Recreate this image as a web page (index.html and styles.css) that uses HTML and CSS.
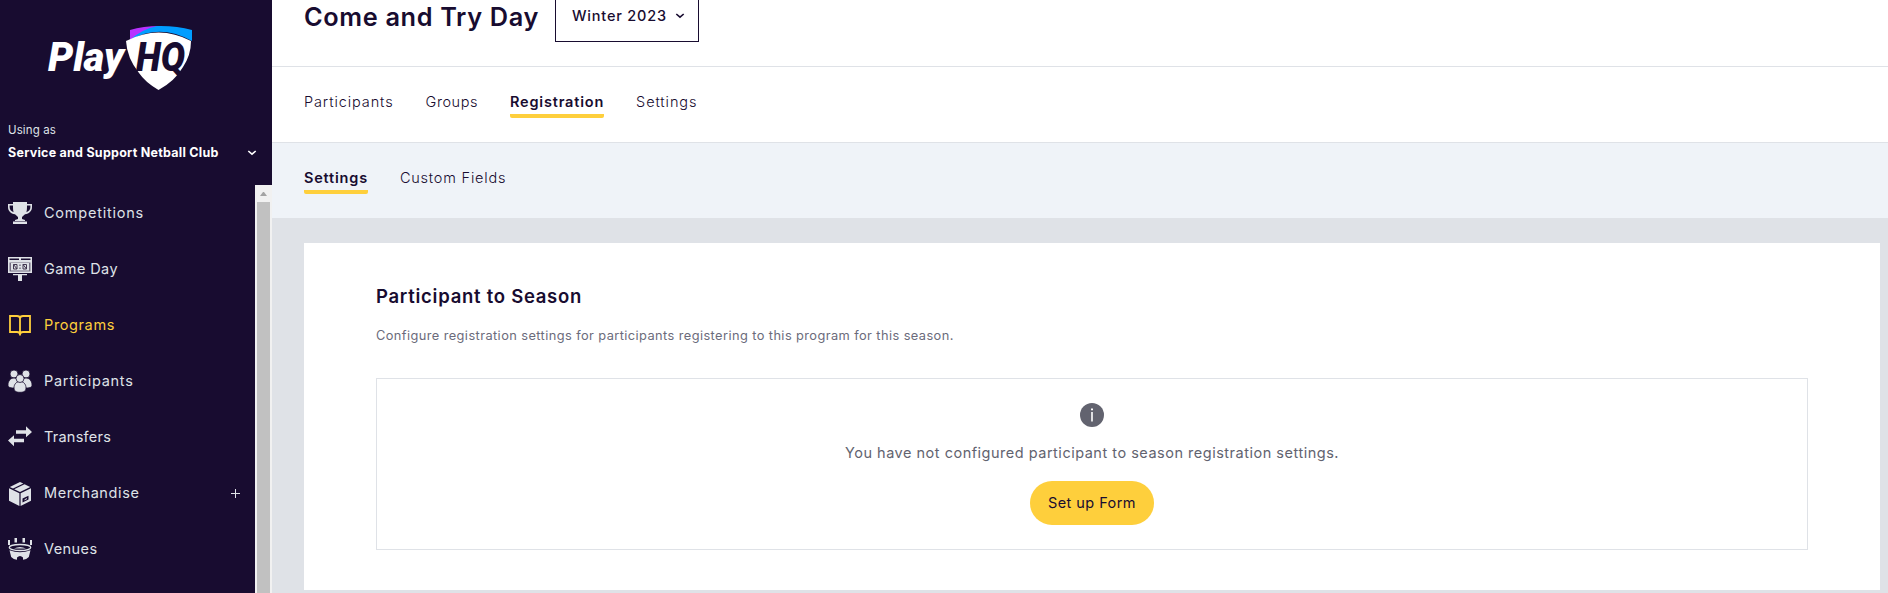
FILE: index.html
```html
<!DOCTYPE html>
<html lang="en">
<head>
    <meta charset="UTF-8">
    <meta name="viewport" content="width=device-width, initial-scale=1.0">
    <title>PlayHQ - Come and Try Day</title>
    <link rel="stylesheet" href="styles.css">
</head>
<body>
    <div class="app">
        <!-- Sidebar -->
        <aside class="sidebar">
            <svg class="logo" width="160" height="80" viewBox="40 15 160 80">
                <path d="M130 30Q143 26 160 26L153 30Q140 34 130 40Z" fill="#b832ff"/>
                <path d="M130 40Q142 29 157 26Q176 25.500 192 30V41Q160 23 130 40Z" fill="#009dff"/>
                <path d="M126 41Q159 24 191 41Q191 55 183 67Q175 81 158.500 90Q145 82 139 73Q127 58 126 41Z" fill="#fff"/>
                <text class="logo-text" x="48" y="71" fill="#fff" textLength="76" lengthAdjust="spacingAndGlyphs">Play</text>
                <text class="logo-text logo-hq" x="136" y="71" textLength="49" lengthAdjust="spacingAndGlyphs">HQ</text>
            </svg>
            <div class="account">
                <div class="account-label">Using as</div>
                <div class="account-name">
                    <span>Service and Support Netball Club</span>
                    <svg width="10" height="6" viewBox="0 0 10 6"><path d="M1.300 1L5 4.200L8.700 1"/></svg>
                </div>
            </div>
            <div class="menu-wrap">
                <nav class="menu">
                    <a class="menu-item competitions">
                        <svg width="24" height="24" viewBox="0 0 24 24"><path d="M5 1h14v2h5v3c0 4-2.500 6.500-7 7.300-1 1.300-2.400 2-3 2.700v2l3 1v1H7v-1l3-1v-2c-.600-.700-2-1.400-3-2.700C2.500 12.500 0 10 0 6V3h5zM1.600 4.500V6c0 2.500 1.400 4.300 4 5.200C5 9.500 5 7 5 4.500zM22.400 4.500H19c0 2.500 0 5-.600 6.700 2.600-.900 4-2.700 4-5.200zM5 20.500h14V23H5z" fill-rule="evenodd"/></svg>
                        <span>Competitions</span>
                    </a>
                    <a class="menu-item game-day">
                        <svg width="24" height="24" viewBox="0 0 24 24"><path d="M0 0h24v16H0zM1.500 1.500v1.500h9.500V1.500zM13 1.500v1.500h9.500V1.500z" fill-rule="evenodd"/><path d="M1.500 5.500h21v9h-21z" fill="#756e83"/><path d="M3 6h18v7.500H3z"/><path d="M5.500 7.500h3.500v4.500H5.500zL9 12M15 7.500h3.500v4.500H15zl3.500 4.500M12 7.500v1.500M12 10.500v1.500" fill="none" stroke="#40364f"/><path d="M5 17h14v1.200h-5V24h-4v-5.800H5z"/></svg>
                        <span>Game Day</span>
                    </a>
                    <a class="menu-item programs active">
                        <svg width="24" height="24" viewBox="0 0 24 24"><path d="M2 3h7c1.700 0 3 1 3 2.500C12 4 13.300 3 15 3h7v16h-7c-1.700 0-3 .500-3 2.500 0-2-1.300-2.500-3-2.500H2zM12 5.500v17" fill="none" stroke="#fecf3c" stroke-width="1.800"/></svg>
                        <span>Programs</span>
                    </a>
                    <a class="menu-item participants">
                        <svg class="people" width="24" height="24" viewBox="0 0 24 24"><circle cx="6" cy="5" r="4"/><circle cx="18" cy="5" r="4"/><path d="M0 16c0-4 2.500-7 6-7s5.500 3 5.500 6-1 4-5.500 4S0 18 0 16zM24 16c0-4-2.500-7-6-7s-5.500 3-5.500 6 1 4 5.500 4 6-1 6-3z"/><path d="M6 19c0-4 2.500-6.500 6-6.500s6 2.500 6 6.500c0 3-2 4.300-6 4.300S6 22 6 19z"/><circle cx="12" cy="9.500" r="4"/></svg>
                        <span>Participants</span>
                    </a>
                    <a class="menu-item transfers">
                        <svg width="24" height="24" viewBox="0 0 24 24"><path d="M8 5.300h10v-4l6 5.800-6 5.200V8.800H8zM16 13.800H6v-3.500l-6 5.200 6 5.800v-4h10z"/></svg>
                        <span>Transfers</span>
                    </a>
                    <a class="menu-item merchandise">
                        <svg width="24" height="24" viewBox="0 0 24 24"><path d="M12 0l3.300 1.600L5 6.600 1.800 5zM16.500 2.200L22.200 5 12 10 6.200 7.200zM1 6.200l10.400 5V24L1 18.700zM23 6.200l-10.400 5V24L23 18.700zM14.500 16.500l6-2.800v3.800l-6 2.900z" fill-rule="evenodd"/><path d="M16.500 17.800l2.500-1.200" stroke="#dfe2e7"/></svg>
                        <span>Merchandise</span>
                        <svg class="plus" width="9" height="9" viewBox="0 0 9 9"><path d="M0 4.500h9M4.500 0v9"/></svg>
                    </a>
                    <a class="menu-item venues">
                        <svg width="24" height="24" viewBox="0 0 24 24"><path d="M0 3h2v5H0zM6.500 1H9v4.500H6.500zM14.500 1H17v4.500h-2.500zM22 3h2v5h-2z"/><ellipse cx="12" cy="10.500" rx="10.700" ry="3" fill="none" stroke="#dfe2e7" stroke-width="1.300"/><path d="M6 11.500q6-3 12 0M1.500 13.300Q12 17 22.500 13.300L20.800 20Q18.500 22.500 15 22.800V20.500Q12 17.500 9 20.500V22.800Q5.500 22.500 3.200 20Z"/></svg>
                        <span>Venues</span>
                    </a>
                </nav>
                <div class="scrollbar">
                    <div class="scroll-arrow"></div>
                    <div class="scroll-thumb"></div>
                </div>
            </div>
        </aside>

        <!-- Page content -->
        <main class="main">
            <header class="page-header">
                <h1>Come and Try Day</h1>
                <div class="season-select">
                    <span>Winter 2023</span>
                    <svg width="10" height="6" viewBox="0 0 10 6"><path d="M1.300 1L5 4.200L8.700 1"/></svg>
                </div>
            </header>
            <nav class="tabs">
                <a class="tab">Participants</a>
                <a class="tab tab-groups">Groups</a>
                <a class="tab active">Registration</a>
                <a class="tab">Settings</a>
            </nav>
            <nav class="tabs sub-tabs">
                <a class="tab active">Settings</a>
                <a class="tab">Custom Fields</a>
            </nav>
            <section class="content">
                <div class="card">
                    <h2>Participant to Season</h2>
                    <p class="description">Configure registration settings for participants registering to this program for this season.</p>
                    <div class="empty-state">
                        <svg class="info" width="24" height="24" viewBox="0 0 24 24"><circle cx="12" cy="12" r="12" fill="#62636f"/><path d="M11 5.500h2v1.800h-2zM11.200 9h1.600v9.500h-1.600z" fill="#fff"/></svg>
                        <p class="message">You have not configured participant to season registration settings.</p>
                        <button class="button">Set up Form</button>
                    </div>
                </div>
            </section>
        </main>
    </div>
</body>
</html>
```
FILE: styles.css
```css
* {
    box-sizing: border-box;
}
body {
    margin: 0;
    font-family: Inter, "Liberation Sans", sans-serif;
    font-size: 14.5px;
    color: #180c30;
    background-color: #fff;
}
h1, h2, p {
    margin: 0;
}
.app {
    display: flex;
    height: 593px;
    overflow: hidden;
}
.sidebar {
    width: 272px;
    flex: none;
    display: flex;
    flex-direction: column;
    background-color: #180c30;
    color: #dfe2e7;
}
.logo {
    display: block;
    margin: 15px 0 0 40px;
}
.logo-text {
    font-family: Roboto, sans-serif;
    font-size: 40px;
    font-weight: 900;
    font-style: italic;
}
.logo-hq {
    fill: #180c30;
}
.account {
    height: 90px;
    padding: 25px 15px 0 8px;
}
.account-label {
    font-size: 11.5px;
    line-height: 20px;
    letter-spacing: 0.12px;
}
.account-name {
    display: flex;
    align-items: center;
    justify-content: space-between;
    line-height: 26px;
    font-size: 12.5px;
    font-weight: 700;
    letter-spacing: 0.25px;
    color: #fff;
}
.account-name path, .season-select path {
    fill: none;
    stroke: currentColor;
    stroke-width: 1.6;
}
.menu-wrap {
    flex: 1;
    display: flex;
    justify-content: space-between;
    min-height: 0;
}
.menu {
    flex: 1;
}
.menu-item {
    display: flex;
    align-items: center;
    gap: 12px;
    height: 56px;
    padding: 0 15px 0 8px;
}
.menu-item span {
    padding-bottom: 2px;
}
.menu-item svg {
    fill: #dfe2e7;
}
.menu-item.active {
    color: #fecf3c;
}
.competitions {
    letter-spacing: 0.77px;
}
.game-day {
    letter-spacing: 0.41px;
}
.programs {
    letter-spacing: 0.62px;
}
.participants {
    letter-spacing: 0.7px;
}
.transfers {
    letter-spacing: 0.24px;
}
.merchandise {
    letter-spacing: 0.6px;
    padding-top: 1px;
}
.venues {
    letter-spacing: 0.42px;
}
.people * {
    stroke: #180c30;
    stroke-width: 0.8;
}
.menu-item .plus {
    margin-left: auto;
    stroke: #dfe2e7;
}
.scrollbar {
    width: 17px;
    display: flex;
    flex-direction: column;
    background-color: #f1f1f1;
}
.scroll-arrow {
    height: 17px;
    padding: 7px 5px 0;
}
.scroll-arrow::before {
    content: "";
    display: block;
    border: 3.5px solid transparent;
    border-top: none;
    border-bottom: 4px solid #a3a3a3;
}
.scroll-thumb {
    flex: 1;
    margin: 0 2px;
    background-color: #c1c1c1;
}
.main {
    flex: 1;
    display: flex;
    flex-direction: column;
}
.page-header {
    height: 67px;
    flex: none;
    display: flex;
    align-items: flex-start;
    gap: 16px;
    padding-left: 32px;
    border-bottom: 1px solid #dfe2e7;
}
h1 {
    width: 235px;
    font-size: 25.3px;
    font-weight: 600;
    line-height: 33px;
    letter-spacing: 0.65px;
    white-space: nowrap;
}
.season-select {
    display: flex;
    align-items: center;
    gap: 8px;
    width: 144px;
    height: 42px;
    padding: 0 0 10px 16px;
    border: 1px solid #180c30;
    border-top: none;
    font-weight: 500;
    letter-spacing: 0.8px;
}
.tabs {
    height: 76px;
    flex: none;
    display: flex;
    gap: 32px;
    padding: 24px 32px 0;
    border-bottom: 1px solid #dfe2e7;
}
.tab {
    height: 27px;
    line-height: 22px;
    font-weight: 300;
    letter-spacing: 0.9px;
}
.tab-groups {
    letter-spacing: 0.56px;
}
.tab.active {
    font-weight: 600;
    letter-spacing: 0.81px;
    border-bottom: 4px solid #fecf3c;
    border-radius: 2px;
}
.sub-tabs {
    height: 75px;
    border-bottom: none;
    background-color: #eff3f8;
}
.sub-tabs .tab {
    letter-spacing: 0.8px;
}
.content {
    flex: 1;
    padding: 25px 8px 3px 32px;
    background-color: #dfe2e7;
}
.card {
    height: 347px;
    padding: 38px 72px 0;
    background-color: #fff;
}
h2 {
    font-size: 18.5px;
    font-weight: 600;
    line-height: 30px;
    letter-spacing: 0.73px;
}
.description {
    margin-top: 15px;
    font-size: 12.8px;
    line-height: 20px;
    letter-spacing: 0.42px;
    color: #6b6b7b;
}
.empty-state {
    display: flex;
    flex-direction: column;
    align-items: center;
    height: 172px;
    margin-top: 32px;
    padding-top: 24px;
    border: 1px solid #dfe2e7;
}
.message {
    margin-top: 15px;
    line-height: 22px;
    letter-spacing: 0.507px;
    color: #62636f;
}
.button {
    width: 124px;
    height: 44px;
    margin-top: 17px;
    padding: 0 0 1px;
    border: none;
    border-radius: 22px;
    background-color: #fecf3c;
    color: #180c30;
    font-family: inherit;
    font-size: 14.5px;
    letter-spacing: 0.44px;
    cursor: pointer;
}
```
